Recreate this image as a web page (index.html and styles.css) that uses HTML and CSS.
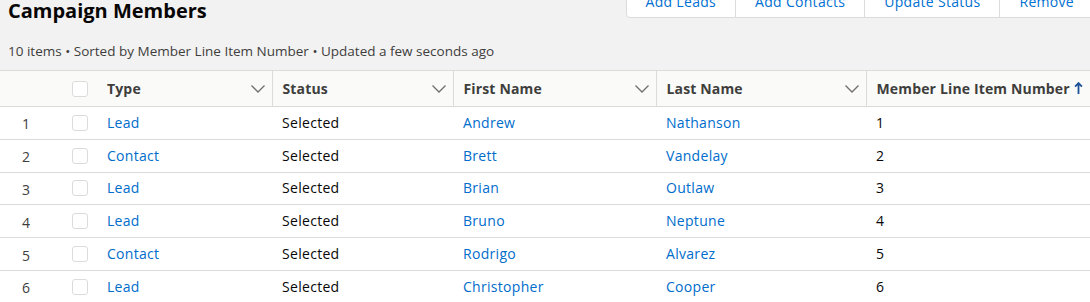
FILE: index.html
```html
<!DOCTYPE html>
<html lang="en">
<head>
    <meta charset="UTF-8">
    <title>Campaign Members</title>
    <link rel="stylesheet" href="styles.css">
</head>
<body>
    <div class="list-header">
        <h1 class="title">Campaign Members</h1>
        <div class="button-group">
            <button class="btn">Add Leads</button>
            <button class="btn">Add Contacts</button>
            <button class="btn">Update Status</button>
            <button class="btn">Remove</button>
        </div>
    </div>
    <div class="list-info">10 items • Sorted by Member Line Item Number • Updated a few seconds ago</div>

    <table class="grid">
        <colgroup>
            <col class="c-num">
            <col class="c-check">
            <col class="c-type">
            <col class="c-status">
            <col class="c-first">
            <col class="c-last">
            <col class="c-member">
        </colgroup>
        <thead>
            <tr>
                <th></th>
                <th class="check-cell"><span class="checkbox"></span></th>
                <th class="no-sep"><div class="th-inner"><span>Type</span><svg class="chevron" viewBox="0 0 16 10"><path d="M1.5 1.5 L8 8 L14.5 1.5"/></svg></div></th>
                <th><div class="th-inner"><span>Status</span><svg class="chevron" viewBox="0 0 16 10"><path d="M1.5 1.5 L8 8 L14.5 1.5"/></svg></div></th>
                <th><div class="th-inner"><span>First Name</span><svg class="chevron" viewBox="0 0 16 10"><path d="M1.5 1.5 L8 8 L14.5 1.5"/></svg></div></th>
                <th><div class="th-inner"><span>Last Name</span><svg class="chevron" viewBox="0 0 16 10"><path d="M1.5 1.5 L8 8 L14.5 1.5"/></svg></div></th>
                <th><div class="th-inner"><span>Member Line Item Number <svg class="sort-arrow" viewBox="0 0 10 14"><path d="M5 1 L5 13 M1.2 5 L5 1 L8.8 5"/></svg></span></div></th>
            </tr>
        </thead>
        <tbody>
            <tr>
                <td class="num">1</td>
                <td class="check-cell"><span class="checkbox"></span></td>
                <td><a href="#">Lead</a></td>
                <td>Selected</td>
                <td><a href="#">Andrew</a></td>
                <td><a href="#">Nathanson</a></td>
                <td>1</td>
            </tr>
            <tr>
                <td class="num">2</td>
                <td class="check-cell"><span class="checkbox"></span></td>
                <td><a href="#">Contact</a></td>
                <td>Selected</td>
                <td><a href="#">Brett</a></td>
                <td><a href="#">Vandelay</a></td>
                <td>2</td>
            </tr>
            <tr>
                <td class="num">3</td>
                <td class="check-cell"><span class="checkbox"></span></td>
                <td><a href="#">Lead</a></td>
                <td>Selected</td>
                <td><a href="#">Brian</a></td>
                <td><a href="#">Outlaw</a></td>
                <td>3</td>
            </tr>
            <tr>
                <td class="num">4</td>
                <td class="check-cell"><span class="checkbox"></span></td>
                <td><a href="#">Lead</a></td>
                <td>Selected</td>
                <td><a href="#">Bruno</a></td>
                <td><a href="#">Neptune</a></td>
                <td>4</td>
            </tr>
            <tr>
                <td class="num">5</td>
                <td class="check-cell"><span class="checkbox"></span></td>
                <td><a href="#">Contact</a></td>
                <td>Selected</td>
                <td><a href="#">Rodrigo</a></td>
                <td><a href="#">Alvarez</a></td>
                <td>5</td>
            </tr>
            <tr>
                <td class="num">6</td>
                <td class="check-cell"><span class="checkbox"></span></td>
                <td><a href="#">Lead</a></td>
                <td>Selected</td>
                <td><a href="#">Christopher</a></td>
                <td><a href="#">Cooper</a></td>
                <td>6</td>
            </tr>
        </tbody>
    </table>
</body>
</html>
```

FILE: styles.css
```css
body {
    background: #f3f2f2;
    color: #080707;
    font-family: "Open Sans", Lato, sans-serif;
    font-size: 14px;
    margin: 0;
    overflow: hidden;
}

.list-header {
    display: flex;
    justify-content: space-between;
    align-items: flex-start;
    padding-left: 8px;
}

.title {
    margin: 0;
    font-size: 20px;
    font-weight: 700;
    line-height: 22px;
    color: #080707;
}

.button-group {
    display: flex;
    margin-top: -14px;
    margin-right: -4px;
}

.btn {
    background: #fff;
    border: 1px solid #dddbda;
    border-left: none;
    color: #0070d2;
    font-family: inherit;
    font-size: 14px;
    letter-spacing: 0.3px;
    height: 32px;
    padding: 0 19px;
    line-height: 30px;
}

.btn:first-child {
    border-left: 1px solid #dddbda;
    border-radius: 0 0 0 4px;
}

.list-info {
    padding: 20px 8px 0;
    height: 28px;
    line-height: 18px;
    color: #3e3e3c;
    font-size: 13.5px;
}

.grid {
    border-collapse: collapse;
    table-layout: fixed;
    width: 1100px;
    background: #fff;
}

.c-num { width: 60px; }
.c-check { width: 35px; }
.c-type { width: 177px; }
.c-status { width: 181px; }
.c-first { width: 203px; }
.c-last { width: 210px; }
.c-member { width: 234px; }

.grid th {
    background: #fafaf9;
    border-top: 1px solid #dddbda;
    border-bottom: 1px solid #dddbda;
    height: 35px;
    padding: 0;
    text-align: left;
    font-weight: 700;
    letter-spacing: 0.15px;
    color: #3e3e3c;
}

.grid th + th + th + th {
    border-left: 1px solid #dddbda;
}

.th-inner {
    display: flex;
    align-items: center;
    justify-content: space-between;
    padding: 0 6px 0 10px;
}

.no-sep .th-inner {
    padding-left: 12px;
}

.chevron {
    width: 16px;
    height: 10px;
    fill: none;
    stroke: #706e6b;
    stroke-width: 1.3;
}

.sort-arrow {
    width: 9px;
    height: 13px;
    fill: none;
    stroke: #1b5297;
    stroke-width: 2;
    vertical-align: -1px;
}

.grid td {
    border-bottom: 1px solid #dddbda;
    height: 31.8px;
    padding: 0 0 0 10px;
    line-height: 18px;
    letter-spacing: 0.3px;
}

.grid td:nth-child(3) {
    padding-left: 12px;
}

.grid td.num {
    height: 28.8px;
    padding: 3px 0 0 22px;
    color: #3e3e3c;
}

.grid .check-cell {
    padding: 0 0 0 12px;
}

.checkbox {
    display: block;
    width: 14px;
    height: 14px;
    border: 1px solid #dddbda;
    border-radius: 3px;
    background: #fff;
}

.grid a {
    color: #006dcc;
    text-decoration: none;
}
```
